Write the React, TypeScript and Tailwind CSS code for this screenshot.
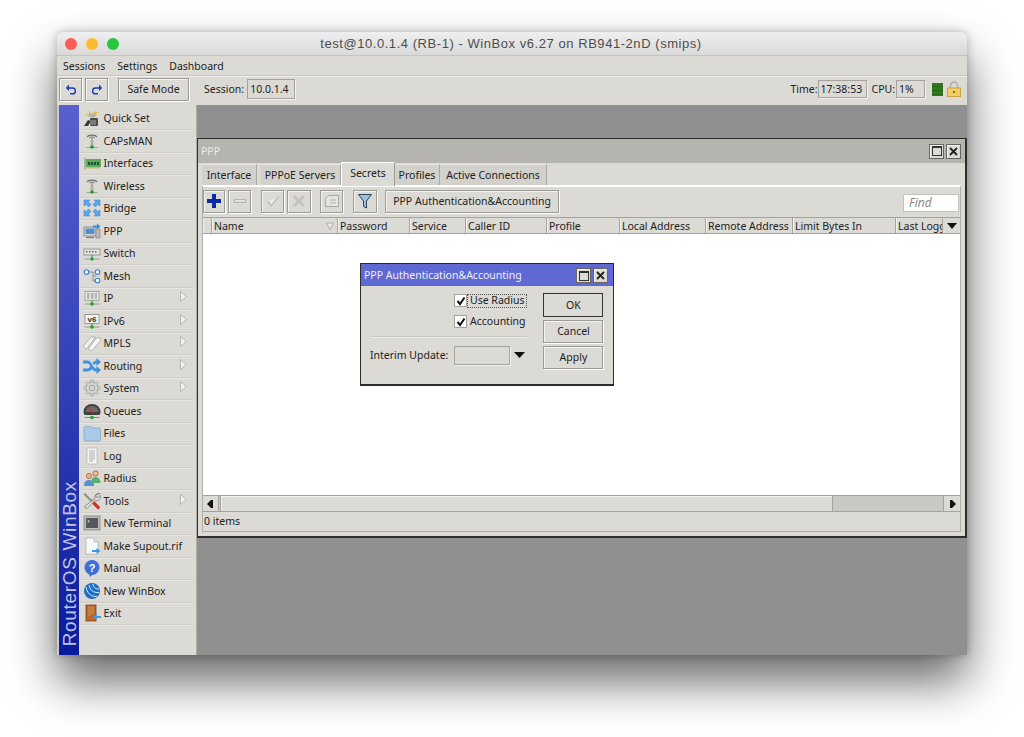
import React from "react";

const Base = ({ children }: { children: React.ReactNode }) => <g>{children}</g>;

const Ground = () => (
  <g>
    <path d="M1.500 15h15" stroke="#9a9a92" strokeWidth="1" />
    <path d="M9 11.500v3" stroke="#2f8f2f" strokeWidth="1" />
    <circle cx="9" cy="15" r="1.800" fill="#22a030" />
  </g>
);

const Antenna = () => (
  <g fill="none">
    <path d="M4 5C5.500 2.500 12.500 2.500 14 5" stroke="#6f6f69" strokeWidth="1.100" />
    <path d="M6.300 6C7.200 4.800 10.800 4.800 11.700 6" stroke="#6f6f69" strokeWidth="1" />
    <path d="M9 6v8" stroke="#8a8a82" strokeWidth="1.200" />
    <path d="M7 9.500h4M6.500 12h5" stroke="#b5b5ad" strokeWidth=".8" />
    <path d="M3.500 15.500h11" stroke="#a0a098" strokeWidth="1" />
    <circle cx="9" cy="15" r="1.800" fill="#1f9a2c" />
  </g>
);

const icons: Record<string, React.ReactNode> = {
  quick: (
    <Base>
      <path d="M1 17l4-6 3 1-3 5z" fill="#3a3a3a" />
      <rect x="7" y="9" width="8" height="8" rx="1" fill="#4c4c4c" />
      <path d="M8 11v5M10 11v5M12 11v5" stroke="#cfcfcf" strokeWidth=".7" />
      <path d="M5 7l2-5 2 4 3-4 1 5-3 2z" fill="#b9b39d" />
      <path d="M13 1l.7 2 2 .7-2 .7-.7 2-.7-2-2-.7 2-.7z" fill="#e8c02c" />
      <path d="M4 4l.5 1.200 1.200.5-1.200.5L4 7.400l-.5-1.200-1.200-.5 1.200-.5z" fill="#e8c02c" />
    </Base>
  ),
  antenna: <Antenna />,
  interfaces: (
    <Base>
      <path d="M1 4h2v11H1z" fill="#b0b0a9" />
      <rect x="3" y="5" width="15" height="8" fill="#5aa862" />
      <path d="M5 8h2v3H5zM8 8h2v3H8zM11 8h2v3h-2zM14 8h2v3h-2z" fill="#1f4f24" />
      <path d="M4 13h13v1.500H4z" fill="#c4bc66" />
    </Base>
  ),
  bridge: (
    <Base>
      <g fill="#58a8e8" stroke="#3a7fcc" strokeWidth=".5">
        <path d="M1 1h6L5.300 2.800 8 5.500 5.500 8 2.800 5.300 1 7z" />
        <path d="M17 1h-6l1.700 1.800L10 5.500 12.500 8l2.700-2.700L17 7z" />
        <path d="M1 17h6l-1.700-1.800L8 12.500 5.500 10l-2.700 2.700L1 11z" />
        <path d="M17 17h-6l1.700-1.800L10 12.500 12.500 10l2.700 2.700L17 11z" />
      </g>
    </Base>
  ),
  ppp: (
    <Base>
      <rect x="1" y="5" width="12" height="9" fill="#d8d8d4" stroke="#7a7a76" strokeWidth=".8" />
      <rect x="2.500" y="6.500" width="9" height="5.500" fill="#4f8fd0" />
      <path d="M3 15.500h8" stroke="#77777a" strokeWidth="1.200" />
      <rect x="13" y="7" width="4" height="9" fill="#bcbcb8" stroke="#77777a" strokeWidth=".6" />
      <path d="M10 3.500h4v-2l3.500 3-3.500 3v-2h-4z" fill="#2f8fe0" />
    </Base>
  ),
  sw: (
    <Base>
      <rect x="1" y="5" width="16" height="6" fill="#e4e4de" stroke="#8a8a84" strokeWidth=".8" />
      <path d="M3 7h1.500v1.500H3zM6 7h1.500v1.500H6zM9 7h1.500v1.500H9zM12 7h1.500v1.500H12z" fill="#6a6a6a" />
      <path d="M1.500 15h15" stroke="#9a9a92" strokeWidth="1" />
      <path d="M9 11v3" stroke="#2f8f2f" />
      <circle cx="9" cy="15" r="1.700" fill="#22a030" />
    </Base>
  ),
  mesh: (
    <Base>
      <path d="M5 5h5v9h3M10 9h3" fill="none" stroke="#8d8d88" strokeWidth="1" />
      <circle cx="3.500" cy="5" r="2.300" fill="#fff" stroke="#3f78d8" strokeWidth="1.100" />
      <circle cx="14.500" cy="5" r="2.300" fill="#fff" stroke="#3f78d8" strokeWidth="1.100" />
      <circle cx="14.500" cy="13.500" r="2.300" fill="#fff" stroke="#3f78d8" strokeWidth="1.100" />
    </Base>
  ),
  ip: (
    <Base>
      <rect x="2" y="2.500" width="14" height="9" fill="#e6e6e2" stroke="#9a9a94" strokeWidth=".8" />
      <path d="M4 5h2.500M4 7h2.500M4 9h2.500M8 5h2.500M8 7h2.500M8 9h2.500M12 5h2M12 7h2M12 9h2" stroke="#77776f" strokeWidth=".9" />
      <Ground />
    </Base>
  ),
  ipv6: (
    <Base>
      <rect x="2" y="2.500" width="14" height="9" fill="#f4f4f0" stroke="#888882" strokeWidth=".8" />
      <text x="9" y="10" textAnchor="middle" fontSize="8" fontWeight="700" fontFamily="Liberation Sans" fill="#333">v6</text>
      <Ground />
    </Base>
  ),
  mpls: (
    <Base>
      <path d="M.5 12L8 3h4.500L5 13l-2 3z" fill="#f4f4f0" stroke="#a8a8a2" strokeWidth=".8" />
      <path d="M5.500 14.500L13.500 4H17.500v2.500L9.500 16l-2 1z" fill="#f8f8f4" stroke="#a8a8a2" strokeWidth=".8" />
    </Base>
  ),
  routing: (
    <Base>
      <path d="M0 3.500h4.500c4.500 0 5 8 9 8V9l4.500 4-4.500 4v-2.500C7.500 14.500 7.500 6.500 4.500 6.500H0z" fill="#3f92e0" />
      <path d="M0 11.500h4.500c1 0 2-1 2.800-2.300l2 2.200C8 13.200 6.500 14.500 4.500 14.500H0zM9.500 6c1-1.300 2.300-2.500 4-2.500V1l4.500 4-4.500 4V6.500c-1 0-1.700.6-2.300 1.500z" fill="#3f92e0" />
    </Base>
  ),
  system: (
    <Base>
      <g fill="#d4d4ce" stroke="#9a9a94" strokeWidth=".7">
        <circle cx="9" cy="9" r="6" />
        <rect x="7.700" y="1" width="2.600" height="16" rx=".8" />
        <rect x="7.700" y="1" width="2.600" height="16" rx=".8" transform="rotate(45 9 9)" />
        <rect x="7.700" y="1" width="2.600" height="16" rx=".8" transform="rotate(90 9 9)" />
        <rect x="7.700" y="1" width="2.600" height="16" rx=".8" transform="rotate(135 9 9)" />
        <circle cx="9" cy="9" r="5.300" stroke="none" />
      </g>
      <circle cx="9" cy="9" r="2.600" fill="#dcdad5" stroke="#9a9a94" strokeWidth=".9" />
    </Base>
  ),
  queues: (
    <Base>
      <path d="M.5 10a8.500 8 0 0 1 17 0c0 2-1 3-2 3H2.500c-1 0-2-1-2-3z" fill="#3f3f3f" />
      <path d="M2.500 10a6.500 6 0 0 1 13 0z" fill="#6a6a6a" />
      <path d="M5 4.500l5 6.500" stroke="#e02a2a" strokeWidth="1.200" />
      <path d="M1.500 15.500h15" stroke="#8a8a84" />
      <circle cx="9" cy="15.500" r="1.800" fill="#22a030" />
    </Base>
  ),
  files: (
    <Base>
      <path d="M1 4c0-1 .5-1.500 1.500-1.500h5L9 4h7c1 0 1.500.5 1.500 1.500V16c0 .5-.5 1-1 1H2c-.5 0-1-.5-1-1z" fill="#a9c9e6" stroke="#7e9fbe" strokeWidth=".7" />
    </Base>
  ),
  log: (
    <Base>
      <path d="M4 1h10v16H4z" fill="#f6f6f2" stroke="#a8a8a2" strokeWidth=".8" strokeDasharray="1.500 .6" />
      <path d="M6 4h6M6 6h6M6 8h6M6 10h6M6 12h6M6 14h4" stroke="#9aa8b0" strokeWidth=".9" />
    </Base>
  ),
  radius: (
    <Base>
      <circle cx="6" cy="7" r="2.600" fill="#e8b58a" stroke="#a8642e" strokeWidth=".8" />
      <path d="M1 17c0-4 2-6 5-6s5 2 5 6z" fill="#5b8ed8" />
      <circle cx="12.500" cy="4.500" r="2.600" fill="#edc09a" stroke="#9a4f22" strokeWidth=".8" />
      <path d="M8 14c0-4 2-6 4.500-6s5 2 5 6z" fill="#58b070" />
    </Base>
  ),
  tools: (
    <Base>
      <path d="M2 1l7 7-1.500 1.500-7-7z" fill="#8f8f8a" />
      <path d="M8.500 8.500L16 16" stroke="#d83030" strokeWidth="3" />
      <path d="M17 1.500a4 4 0 0 0-5 5L1.500 14.500l2 2.500L12 8.500a4 4 0 0 0 5.300-5l-2.300 2-2-.5-.5-2z" fill="#e2e2de" stroke="#77776f" strokeWidth=".8" />
      <path d="M11 11.500l5 5" stroke="#d83030" strokeWidth="3" />
    </Base>
  ),
  terminal: (
    <Base>
      <rect x="1" y="2" width="16" height="14" fill="#bcbcb6" stroke="#85857f" strokeWidth=".8" />
      <rect x="3" y="4" width="12" height="10" fill="#55555d" />
      <path d="M4.500 6l2 1.300-2 1.300" fill="none" stroke="#e6e6e6" strokeWidth=".8" />
    </Base>
  ),
  supout: (
    <Base>
      <path d="M3 1h8l4 4v12H3z" fill="#f7fafc" stroke="#a9b3ba" strokeWidth=".8" />
      <path d="M11 1v4h4" fill="#dfe6ea" stroke="#a9b3ba" strokeWidth=".8" />
      <path d="M9 13h4.500v-2l4 3-4 3v-2H9z" fill="#3a96e6" />
    </Base>
  ),
  manual: (
    <Base>
      <circle cx="9" cy="8.500" r="7.500" fill="#3f6fd8" />
      <path d="M6 15l1 3 3-3z" fill="#3f6fd8" />
      <text x="9" y="12.500" textAnchor="middle" fontSize="11" fontWeight="700" fontFamily="Liberation Sans" fill="#fff">?</text>
    </Base>
  ),
  winbox: (
    <Base>
      <circle cx="9" cy="9" r="8" fill="#1f6fc4" />
      <path d="M3 5c1 6 5 10 11 9.500M6 3c1 5 4 8 10 7.500M10 2c0 3 2 5 6 5" fill="none" stroke="#d6ecff" strokeWidth="1" />
    </Base>
  ),
  exit: (
    <Base>
      <rect x="3" y="1" width="10" height="16" fill="#b86a30" stroke="#7a4218" strokeWidth=".8" />
      <path d="M5 3h6M5 5h6M5 7h6M5 9h6M5 11h3" stroke="#d89a60" strokeWidth=".8" />
      <path d="M18 12h-4v-2l-4 3 4 3v-2h4z" fill="#3f9ae6" />
    </Base>
  ),
};

const Icon = ({ name }: { name: string }) => (
  <svg width="18" height="18" viewBox="0 0 18 18" className="shrink-0">
    {icons[name]}
  </svg>
);

const menu: [string, string, boolean?][] = [
  ["Quick Set", "quick"],
  ["CAPsMAN", "antenna"],
  ["Interfaces", "interfaces"],
  ["Wireless", "antenna"],
  ["Bridge", "bridge"],
  ["PPP", "ppp"],
  ["Switch", "sw"],
  ["Mesh", "mesh"],
  ["IP", "ip", true],
  ["IPv6", "ipv6", true],
  ["MPLS", "mpls", true],
  ["Routing", "routing", true],
  ["System", "system", true],
  ["Queues", "queues"],
  ["Files", "files"],
  ["Log", "log"],
  ["Radius", "radius"],
  ["Tools", "tools", true],
  ["New Terminal", "terminal"],
  ["Make Supout.rif", "supout"],
  ["Manual", "manual"],
  ["New WinBox", "winbox"],
  ["Exit", "exit"],
];

const MenuRow = ({ label, icon, sub }: { label: string; icon: string; sub?: boolean }) => (
  <div className="h-[22.5px] flex items-center pl-[3px] pr-[7px] ml-[1px] mr-[2px] border-b border-[#cfcdc7] shadow-[0_1px_0_#e8e6e2]">
    <Icon name={icon} />
    <span className="ml-[2.5px] flex-1">{label}</span>
    {sub && (
      <svg width="7" height="11" viewBox="0 0 7 11" className="-mt-[3px]">
        <path d="M.5.500L6.500 5.500.5 10.500z" fill="#f2f2ee" stroke="#a8a8a2" strokeWidth=".8" />
      </svg>
    )}
  </div>
);

const BevelBtn = ({ className, children }: { className: string; children?: React.ReactNode }) => (
  <div className={`border border-[#9c9b95] shadow-[1px_1px_0_#fff,inset_1px_1px_0_#f4f3f0] flex items-center justify-center shrink-0 ${className}`}>
    {children}
  </div>
);

const Field = ({ className, children }: { className: string; children?: React.ReactNode }) => (
  <div className={`border border-[#a3a29c] shadow-[1px_1px_0_#f4f3f0] flex items-center pl-[2px] shrink-0 ${className}`}>
    {children}
  </div>
);

const Tab = ({ w, label, active }: { w: string; label: string; active?: boolean }) => (
  <div
    className={
      active
        ? `${w} h-[24px] -mb-[1px] pb-[2px] flex items-center justify-center bg-[#dcdad5] border border-b-0 border-white border-r-[#9c9b95] relative`
        : `${w} h-[21px] pt-[1px] flex items-center justify-center bg-[#d3d1cc] border-t border-[#e8e6e2] border-r border-r-[#a9a8a2]`
    }
  >
    {label}
  </div>
);

const Th = ({ w, label }: { w: string; label: string }) => (
  <div className={`${w} h-full flex items-center pl-[2px] pt-[1px] border-r border-[#a3a29c] shadow-[inset_1px_0_0_#f4f3f0] overflow-hidden whitespace-nowrap shrink-0`}>
    {label}
  </div>
);

const WinBtn = ({ kind, className }: { kind: "max" | "close"; className?: string }) => (
  <div className={`w-[15px] h-[15px] border border-[#66655f] bg-[#dcdad5] shadow-[inset_1px_1px_0_#f4f3f0] flex items-center justify-center ${className ?? ""}`}>
    {kind === "max" ? (
      <div className="w-[10px] h-[10px] border border-[#333] border-t-2" />
    ) : (
      <svg width="9" height="9" viewBox="0 0 9 9">
        <path d="M1 1l7 7M8 1l-7 7" stroke="#222" strokeWidth="1.800" />
      </svg>
    )}
  </div>
);

const Check = () => (
  <div className="w-[13px] h-[13px] bg-white border border-[#a3a29c] flex items-center justify-center shrink-0">
    <svg width="10" height="10" viewBox="0 0 10 10">
      <path d="M1.500 5l2.500 3L8.500 1.500" fill="none" stroke="#111" strokeWidth="2" />
    </svg>
  </div>
);

export default function App() {
  return (
    <div className="w-[1024px] h-[737px] bg-white pt-[32px] pl-[57px] overflow-hidden font-['Noto_Sans',sans-serif] text-[10.5px] leading-none text-[#222]">
      <div className="w-[910px] h-[623px] rounded-t-[6px] flex flex-col shadow-[0_26px_48px_rgba(0,0,0,0.6),0_0_8px_rgba(0,0,0,0.25)] bg-[#dcdad5]">
        {/* macOS title */}
        <div className="h-[24px] rounded-t-[6px] bg-gradient-to-b from-[#efefef] to-[#d9d9d9] border-b border-[#c4c4c4] flex items-center relative shrink-0">
          <div className="flex gap-[9px] ml-[8px]">
            <div className="w-[12px] h-[12px] rounded-full bg-[#fc5b57]" />
            <div className="w-[12px] h-[12px] rounded-full bg-[#fdbb2e]" />
            <div className="w-[12px] h-[12px] rounded-full bg-[#27c83f]" />
          </div>
          <div className="flex-1 text-center font-['Liberation_Sans',sans-serif] text-[13px] tracking-[0.55px] text-[#4d4d4d] pr-[64px]">
            test@10.0.1.4 (RB-1) - WinBox v6.27 on RB941-2nD (smips)
          </div>
        </div>
        {/* menu */}
        <div className="h-[20px] flex items-center pl-[6px] pt-[1px] gap-[12px] shrink-0 border-b border-[#c9c7c2] shadow-[0_1px_0_#efeeea]">
          <span>Sessions</span>
          <span>Settings</span>
          <span>Dashboard</span>
        </div>
        {/* toolbar */}
        <div className="h-[29px] flex items-center pl-[2px] pb-[3px] shrink-0">
          <BevelBtn className="w-[23px] h-[23px]">
            <svg width="12" height="11" viewBox="0 0 12 11">
              <path d="M3 4h4.500a2.800 2.800 0 0 1 0 5.800H5" fill="none" stroke="#1a3fb8" strokeWidth="1.400" />
              <path d="M4 .5L.8 4 4 7z" fill="#1a3fb8" />
            </svg>
          </BevelBtn>
          <BevelBtn className="w-[23px] h-[23px] ml-[3px]">
            <svg width="12" height="11" viewBox="0 0 12 11">
              <path d="M9 4H4.500a2.800 2.800 0 0 0 0 5.800H7" fill="none" stroke="#1a3fb8" strokeWidth="1.400" />
              <path d="M8 .5L11.200 4 8 7z" fill="#1a3fb8" />
            </svg>
          </BevelBtn>
          <BevelBtn className="w-[71px] h-[23px] ml-[10px]">Safe Mode</BevelBtn>
          <span className="ml-[15px]">Session:</span>
          <Field className="w-[48px] h-[20px] ml-[3px]">10.0.1.4</Field>
          <div className="flex-1" />
          <span>Time:</span>
          <Field className="w-[49px] h-[18px]">17:38:53</Field>
          <span className="ml-[5px]">CPU:</span>
          <Field className="w-[29px] h-[18px] ml-[1px]">1%</Field>
          <div className="w-[11px] h-[13px] ml-[7px] bg-[repeating-linear-gradient(180deg,#2f7a1f_0,#2f7a1f_3px,#256618_3px,#256618_4px)]" />
          <svg width="14" height="16" viewBox="0 0 14 16" className="ml-[4px] mr-[6px]">
            <path d="M3.500 7V4.500a3.500 3.500 0 0 1 7 0V7" fill="none" stroke="#b0aea8" strokeWidth="1.500" />
            <rect x=".5" y="7" width="13" height="8.500" fill="#f2cf66" stroke="#c8a440" />
            <rect x="6" y="10" width="2" height="2" fill="#8a6a10" />
          </svg>
        </div>
        {/* main */}
        <div className="flex-1 flex min-h-0">
          <div className="w-[140px] flex shrink-0 border-r border-[#b0aea8]">
            <div className="w-[2px] bg-[#cfcdc8]" />
            <div className="w-[20px] bg-gradient-to-b from-[#5a5fd0] to-[#0a1a9c] flex items-end justify-center pb-[9px]">
              <span className="[writing-mode:vertical-rl] rotate-180 font-['Liberation_Sans',sans-serif] text-[19px] tracking-[0.67px] text-[#c0c4ea] whitespace-nowrap">
                RouterOS WinBox
              </span>
            </div>
            <div className="flex-1 pt-[2.5px] flex flex-col">
              {menu.map(([l, i, s]) => (
                <MenuRow key={l} label={l} icon={i} sub={s} />
              ))}
            </div>
          </div>
          {/* MDI */}
          <div className="flex-1 bg-[#909090] relative">
            <div className="absolute left-0 top-[33px] w-[770px] h-[400px] border border-[#2d2d2d] border-r-2 border-b-2 bg-[#dcdad5] flex flex-col">
              <div className="h-[24px] bg-[#b6b4ae] flex items-center pl-[3px] pr-[4px] shrink-0 text-[#ecebe8]">
                <span className="flex-1">PPP</span>
                <WinBtn kind="max" />
                <WinBtn kind="close" className="ml-[2px]" />
              </div>
              <div className="flex pl-[4px] items-end h-[22px] shrink-0 relative z-10">
                <Tab w="w-[55px]" label="Interface" />
                <div className="w-[3px]" />
                <Tab w="w-[81px]" label="PPPoE Servers" />
                <Tab w="w-[54px]" label="Secrets" active />
                <Tab w="w-[45px]" label="Profiles" />
                <Tab w="w-[107px]" label="Active Connections" />
              </div>
              <div className="flex-1 mx-[4px] mb-[4px] border border-[#b0aea8] border-t-white border-t-2 flex flex-col min-h-0">
                <div className="h-[30px] flex items-start pt-[2.5px] shrink-0">
                  <BevelBtn className="w-[22px] h-[23px]">
                    <svg width="14" height="14" viewBox="0 0 14 14">
                      <path d="M5 0h4v5h5v4H9v5H5V9H0V5h5z" fill="#0a2aa8" />
                    </svg>
                  </BevelBtn>
                  <BevelBtn className="w-[23px] h-[23px] ml-[3px]">
                    <div className="w-[12px] h-[4px] border border-[#b5b4ae] bg-[#e6e4e0]" />
                  </BevelBtn>
                  <BevelBtn className="w-[23px] h-[23px] ml-[10px]">
                    <svg width="14" height="14" viewBox="0 0 14 14">
                      <path d="M1.500 7.500l4 4 7-9" fill="#ecebe8" stroke="#b5b4ae" strokeWidth="1.200" />
                    </svg>
                  </BevelBtn>
                  <BevelBtn className="w-[24px] h-[23px] ml-[3px]">
                    <svg width="14" height="14" viewBox="0 0 14 14">
                      <path d="M2 2l10 10M12 2L2 12" stroke="#c4c3bd" strokeWidth="3" />
                    </svg>
                  </BevelBtn>
                  <BevelBtn className="w-[23px] h-[23px] ml-[9px]">
                    <svg width="14" height="12" viewBox="0 0 14 12">
                      <path d="M3.500.5h10v11H.5v-8z" fill="#e6e4e0" stroke="#a9a8a2" />
                      <path d="M5 5h6M5 8h6" stroke="#b5b4ae" />
                    </svg>
                  </BevelBtn>
                  <BevelBtn className="w-[24px] h-[23px] ml-[10px]">
                    <svg width="14" height="15" viewBox="0 0 14 15">
                      <path d="M.5.500h13L8.500 7v7l-3-1.500V7z" fill="#9fc0dc" stroke="#26485e" />
                    </svg>
                  </BevelBtn>
                  <BevelBtn className="w-[174px] h-[23px] ml-[8px]">PPP Authentication&amp;Accounting</BevelBtn>
                  <div className="flex-1" />
                  <div className="w-[56px] h-[18px] bg-white border border-[#c3c2bc] flex items-center pl-[5px] italic text-[#8a8a86] text-[12px] mr-[1px] mt-[4.5px]">
                    Find
                  </div>
                </div>
                <div className="h-[17px] flex shrink-0 bg-[#dcdad5] border-y border-[#a3a29c]">
                  <Th w="w-[9px]" label="" />
                  <div className="w-[126px] h-full flex items-center justify-between pl-[2px] pt-[1px] pr-[3px] border-r border-[#a3a29c] shadow-[inset_1px_0_0_#f4f3f0] shrink-0">
                    <span>Name</span>
                    <svg width="8" height="8" viewBox="0 0 8 8">
                      <path d="M.5 1h7L4 7.500z" fill="#ecebe8" stroke="#a3a29c" strokeWidth=".8" />
                    </svg>
                  </div>
                  <Th w="w-[72px]" label="Password" />
                  <Th w="w-[56px]" label="Service" />
                  <Th w="w-[81px]" label="Caller ID" />
                  <Th w="w-[73px]" label="Profile" />
                  <Th w="w-[86px]" label="Local Address" />
                  <Th w="w-[87px]" label="Remote Address" />
                  <Th w="w-[103px]" label="Limit Bytes In" />
                  <Th w="w-[47px]" label="Last Logged Out" />
                  <div className="flex-1 flex items-center justify-center">
                    <svg width="10" height="6" viewBox="0 0 10 6">
                      <path d="M0 0h10L5 6z" fill="#111" />
                    </svg>
                  </div>
                </div>
                <div className="flex-1 bg-white min-h-0" />
                <div className="h-[17px] flex shrink-0 border-y border-[#a3a29c] bg-[#cac8c2]">
                  <div className="w-[16px] flex items-center justify-center bg-[#dcdad5] border-r border-[#a3a29c]">
                    <svg width="8" height="8" viewBox="0 0 8 8"><path d="M0 4l4-4h2v8H4z" fill="#111" /></svg>
                  </div>
                  <div className="w-[613px] ml-[1px] bg-[#dcdad5] border-x border-[#a3a29c] shadow-[inset_1px_1px_0_#f4f3f0]" />
                  <div className="flex-1" />
                  <div className="w-[17px] flex items-center justify-center bg-[#dcdad5] border-l border-[#a3a29c]">
                    <svg width="8" height="8" viewBox="0 0 8 8"><path d="M8 4L4 0H2v8h2z" fill="#111" /></svg>
                  </div>
                </div>
                <div className="h-[19px] flex items-center pl-[1px] shrink-0">0 items</div>
              </div>
            </div>
            {/* dialog */}
            <div className="absolute left-[163px] top-[158px] w-[254px] h-[123px] border border-[#2d2d2d] border-b-2 bg-[#dcdad5] flex flex-col">
              <div className="h-[22px] bg-[#5f69d3] flex items-center pl-[3px] pt-[1px] pr-[5px] text-[#eef0fa] shrink-0">
                <span className="flex-1">PPP Authentication&amp;Accounting</span>
                <WinBtn kind="max" />
                <WinBtn kind="close" className="ml-[2px]" />
              </div>
              <div className="flex flex-1 min-h-0">
                <div className="flex-1 pl-[9px] pr-[16px] pt-[8px] flex flex-col">
                  <div className="flex items-center pl-[84px] h-[13px]">
                    <Check />
                    <span className="h-[14px] px-[2px] flex items-center border border-dotted border-[#555] whitespace-nowrap">Use Radius</span>
                  </div>
                  <div className="flex items-center pl-[84px] h-[13px] mt-[8px]">
                    <Check />
                    <span className="ml-[3px] whitespace-nowrap">Accounting</span>
                  </div>
                  <div className="h-[2px] border-t border-[#c9c7c2] bg-[#ecebe8] mt-[8px]" />
                  <div className="flex items-center mt-[8px]">
                    <span className="w-[84px] whitespace-nowrap">Interim Update:</span>
                    <Field className="w-[56px] h-[19px]" />
                    <svg width="11" height="6" viewBox="0 0 11 6" className="ml-[4px] -mt-[2px]">
                      <path d="M0 0h11L5.500 6z" fill="#111" />
                    </svg>
                  </div>
                </div>
                <div className="w-[70px] pt-[7px] flex flex-col gap-[2.5px]">
                  <BevelBtn className="w-[60px] h-[24px] border-[#333] shadow-none">OK</BevelBtn>
                  <BevelBtn className="w-[60px] h-[23.500px]">Cancel</BevelBtn>
                  <BevelBtn className="w-[60px] h-[23.500px]">Apply</BevelBtn>
                </div>
              </div>
            </div>
          </div>
        </div>
      </div>
    </div>
  );
}
